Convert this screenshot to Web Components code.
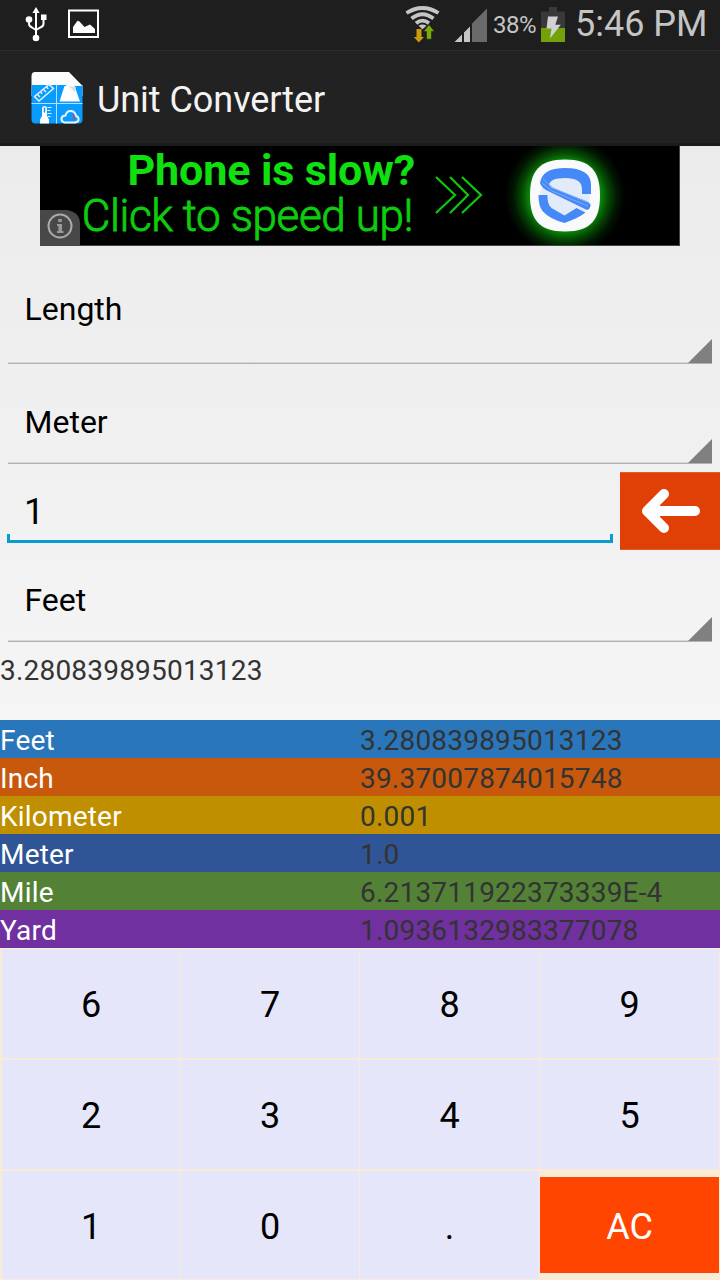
<!DOCTYPE html>
<html lang="en">
<head>
<meta charset="utf-8">
<title>Unit Converter</title>
<style>
    body {
        margin: 0;
        font-family: Roboto, "Noto Sans", sans-serif;
        color: #000;
    }
</style>
</head>
<body>
<converter-app>
    <status-bar slot="top" battery="38%" time="5:46 PM"></status-bar>
    <action-bar slot="top">Unit Converter</action-bar>
    <ad-banner>
        <span slot="headline">Phone is slow?</span>
        <span slot="action">Click to speed up!</span>
    </ad-banner>
    <unit-spinner style="height: 118px; --pad: 40px">Length</unit-spinner>
    <unit-spinner style="height: 100px; --pad: 35px">Meter</unit-spinner>
    <value-field>1</value-field>
    <unit-spinner style="height: 92px; --pad: 27px">Feet</unit-spinner>
    <result-text>3.280839895013123</result-text>
    <unit-row color="#2a76ba" name="Feet">3.280839895013123</unit-row>
    <unit-row color="#c8590c" name="Inch">39.37007874015748</unit-row>
    <unit-row color="#bf8f00" name="Kilometer">0.001</unit-row>
    <unit-row color="#2f5596" name="Meter">1.0</unit-row>
    <unit-row color="#538237" name="Mile">6.213711922373339E-4</unit-row>
    <unit-row color="#7030a0" name="Yard">1.0936132983377078</unit-row>
    <key-pad>
        <key-button>6</key-button>
        <key-button>7</key-button>
        <key-button>8</key-button>
        <key-button>9</key-button>
        <key-button>2</key-button>
        <key-button>3</key-button>
        <key-button>4</key-button>
        <key-button>5</key-button>
        <key-button>1</key-button>
        <key-button>0</key-button>
        <key-button>.</key-button>
        <key-button accent>AC</key-button>
    </key-pad>
</converter-app>

<script>
class ConverterApp extends HTMLElement {
    constructor() {
        super();
        this.shadow = this.attachShadow({ mode: "open" });
    }
    connectedCallback() {
        this.shadow.innerHTML = `<style>
        :host{
            display:flex;
            flex-direction:column;
            width:720px;
            height:1280px;
            overflow:hidden;
            background:linear-gradient(#e9e9e9, #f5f5f5 720px);
        }
        </style>
        <slot name="top"></slot>
        <slot></slot>
        `;
    }
}

window.customElements.define("converter-app", ConverterApp);

class StatusBar extends HTMLElement {
    constructor() {
        super();
        this.shadow = this.attachShadow({ mode: "open" });
    }
    connectedCallback() {
        this.shadow.innerHTML = `<style>
        :host{
            display:flex;
            box-sizing:border-box;
            height:51px;
            background:#1e1e1e;
            border-bottom:1px solid #2d2d2d;
            color:#c5c5c5;
        }
        svg{
            display:block;
            flex:none;
        }
        .spacer{
            flex:1;
        }
        .battery{
            font-size:24px;
            line-height:51px;
            width:48px;
            white-space:nowrap;
            letter-spacing:-.5px;
        }
        .time{
            font-size:36px;
            line-height:49px;
            width:145px;
            white-space:nowrap;
        }
        </style>
        <svg width="110" height="50" viewBox="0 0 110 50">
            <g fill="none" stroke="#fff" stroke-width="2">
                <path d="M36 10v26M29 20v4q0 2 3 3.500l4 2.500M43.500 18v6q0 2-3 3.500l-4.500 2.500"/>
            </g>
            <path fill="#fff" d="M36 7l3.600 6h-7.200zM41 14.500h5.500v5.500H41z"/>
            <circle cx="29" cy="19.500" r="3.300" fill="#fff"/>
            <circle cx="36" cy="38" r="3.300" fill="#fff"/>
            <path fill="#fff" fill-rule="evenodd" d="M68 9.500h31V38H68zM70 11.500V36h27V11.500z"/>
            <path fill="#fff" d="M73 33v-6l4.500-6.200 2 .7 5 5.500 5.500-2.500 5 4.500v4z"/>
        </svg>
        <div class="spacer"></div>
        <svg width="90" height="50" viewBox="403 0 90 50">
            <g fill="none" stroke="#c5c5c5" stroke-width="3.800">
                <path d="M406.500 13Q422.500 3 438.500 13"/>
                <path d="M411.500 18.500Q422.500 10 433.500 18.500"/>
                <path d="M416 23.300Q422.500 18 429 23.300"/>
            </g>
            <path fill="#c5c5c5" d="M418.500 25.800q4-2.500 8 0l-4 3.500z"/>
            <path fill="#c99a0c" d="M416.500 29h5v8h2.500l-5.200 5.500-5-5.500h2.700z"/>
            <path fill="#7aab0a" stroke="#1e1e1e" stroke-width=".6" d="M429 24.500l5.500 7h-3v7.700h-5v-7.700h-3z"/>
            <path fill="#6a6a6a" d="M472 23.500L487 8.500V42H472z"/>
            <path fill="#c5c5c5" d="M454.500 42l7.500-7.500V42zM464 32.500l6-6V42h-6z"/>
        </svg>
        <div class="battery">${this.getAttribute("battery")}</div>
        <svg width="34" height="50" viewBox="541 0 34 50">
            <path fill="#393939" d="M541 11.500h8V7h8v4.500h8V28h-24z"/>
            <path fill="#72a109" d="M541 28h24v14h-24z"/>
            <path fill="#d2d2d2" d="M548 16.500h10l-2.700 8.300h5.500L550 38.500l1.500-10h-5z"/>
        </svg>
        <div class="time">${this.getAttribute("time")}</div>
        `;
    }
}

window.customElements.define("status-bar", StatusBar);

class ActionBar extends HTMLElement {
    constructor() {
        super();
        this.shadow = this.attachShadow({ mode: "open" });
    }
    connectedCallback() {
        this.shadow.innerHTML = `<style>
        :host{
            display:flex;
            align-items:center;
            box-sizing:border-box;
            height:95px;
            padding-left:31px;
            gap:14px;
            background:#222;
            border-bottom:3px solid #1b1b1b;
            color:#f3f3f3;
            font-size:36px;
            letter-spacing:-.05px;
            white-space:nowrap;
        }
        span{
            padding-top:6px;
        }
        svg{
            padding-top:2px;
        }
        </style>
        <svg width="52" height="52" viewBox="0 0 52 52">
            <path fill="#fdfdfd" d="M4 0h34l13.500 14v10H.500V4q0-4 3.500-4z"/>
            <path fill="#0a9bff" d="M.500 13h51v34.500q0 4-4 4h-43q-4 0-4-4z"/>
            <path fill="#fdfdfd" d="M38 1l13.500 13H35z"/>
            <path stroke="#b5e0ff" d="M.500 31.500h51M25.500 13v38.500"/>
            <g fill="none" stroke="#e8f6ff" stroke-width="1.400">
                <path d="M3.500 24.500L18 12.500l4.500 4L8 29z"/>
                <path d="M6.500 22.500l2.500 2.500M9.500 20l1.700 1.700M12.500 17.500l2.500 2.500M15.500 15l1.700 1.700"/>
                <path stroke-width="1" d="M16.500 35.500h4M16.500 38.500h3M16.500 41.500h4M16.500 44.500h3"/>
                <path stroke-width="2" d="M33.500 50.500q-3.500-1-3-4 .500-3 4-3 1-4.500 5-4.500 4.500 0 5.500 5 3 1 2.500 4-.500 2-3.500 2.500z"/>
            </g>
            <path fill="#fdfdfd" d="M33.500 14h10l5.500 15.500H28.500z"/>
            <path fill="#ddd" d="M38 14l5.500 6 1.500-5z"/>
            <path fill="#fdfdfd" d="M11 44v-8q.200-2 2.500-2 2.300 0 2.500 2v8l2 3.500v4H9v-4z"/>
            <path stroke="#0a9bff" stroke-width="1.500" d="M13.500 35.500v5"/>
            <path fill="none" stroke="#d83a61" stroke-width="1.500" d="M42 42.500q3 2.500 0 5"/>
        </svg>
        <span><slot></slot></span>
        `;
    }
}

window.customElements.define("action-bar", ActionBar);

class AdBanner extends HTMLElement {
    constructor() {
        super();
        this.shadow = this.attachShadow({ mode: "open" });
    }
    connectedCallback() {
        this.shadow.innerHTML = `<style>
        :host{
            display:flex;
            position:relative;
            box-sizing:border-box;
            flex:none;
            width:640px;
            height:100px;
            margin:0 40px;
            border-bottom:1px solid #444;
            border-right:1px solid #444;
            background:#000;
            color:#10e010;
            white-space:nowrap;
            overflow:hidden;
        }
        .copy{
            display:flex;
            flex-direction:column;
            align-items:flex-end;
            width:375px;
        }
        .headline{
            font-size:43px;
            font-weight:700;
            line-height:49px;
            letter-spacing:-.1px;
        }
        .action{
            padding-right:2px;
            font-size:44px;
            font-weight:300;
            line-height:43px;
            letter-spacing:-.4px;
            color:#0dcd0d;
            -webkit-text-stroke:.9px #0dcd0d;
        }
        .art{
            flex:none;
        }
        .info{
            position:absolute;
            left:0;
            bottom:0;
        }
        </style>
        <div class="copy">
            <div class="headline"><slot name="headline"></slot></div>
            <div class="action"><slot name="action"></slot></div>
        </div>
        <svg class="art" width="264" height="99" viewBox="415 146 264 99">
            <defs>
                <radialGradient id="glow">
                    <stop offset=".5" stop-color="#10a80c"/>
                    <stop offset=".6" stop-color="#0a8407"/>
                    <stop offset=".72" stop-color="#054a04"/>
                    <stop offset=".86" stop-color="#021802"/>
                    <stop offset="1" stop-color="#000"/>
                </radialGradient>
            </defs>
            <path fill="none" stroke="#0dc80d" stroke-width="2.200" d="M436 177l19 18-19 18M450 177l18 18-18 18M462 177l19 18-19 18"/>
            <circle cx="565" cy="196" r="60" fill="url(#glow)"/>
            <path fill="#fafafc" d="M565 159.500c26 0 35 12 35 36s-9 36-35 36-35-12-35-36 9-36 35-36z"/>
            <circle cx="565" cy="196" r="25" fill="#e3eaf8"/>
            <path fill="#4589f8" d="M540 183q2-15 25-15 26 0 26 17v9h-9v-5q0-11-17-11-15 0-16 7l3 3 34 13q5 2 4.500 5-.5 3-3.500 4l-37-18q-9-4-10-9z"/>
            <path fill="#4589f8" d="M538.500 195h9q-.500 9 4 13l13 7.500 12-7.500 9 4.500q-6 5-21 10.500-15-4-22-12-4-5-4-16z"/>
            <path fill="none" stroke="#7dabfa" stroke-width="1" d="M543 179l10 9 36 15M542 183l10 8 36 15"/>
        </svg>
        <svg class="info" width="40" height="35" viewBox="0 0 40 35">
            <path fill="#484848" d="M0 0h27q13 2 13 14v21H0z"/>
            <circle cx="20" cy="16" r="11.500" fill="none" stroke="#aaa" stroke-width="2"/>
            <path fill="#999" d="M18.300 9h3.500v3h-3.500zM17 14h5v7h1.500v2H17v-2h1.500v-5H17z"/>
        </svg>
        `;
    }
}

window.customElements.define("ad-banner", AdBanner);

class UnitSpinner extends HTMLElement {
    constructor() {
        super();
        this.shadow = this.attachShadow({ mode: "open" });
    }
    connectedCallback() {
        this.setAttribute("role", "listbox");
        this.shadow.innerHTML = `<style>
        :host{
            display:flex;
            justify-content:space-between;
            align-items:flex-end;
            box-sizing:border-box;
            flex:none;
            margin:0 8px;
            border-bottom:1px solid #b2b2b2;
            box-shadow:inset 0 -1px #d8d8d8;
        }
        span{
            align-self:flex-start;
            padding:var(--pad) 0 0 16.5px;
            font-size:32px;
            line-height:46px;
        }
        svg{
            display:block;
        }
        </style>
        <span><slot></slot></span>
        <svg width="24" height="24"><path fill="#808080" d="M24 0v24H0z"/></svg>
        `;
    }
}

window.customElements.define("unit-spinner", UnitSpinner);

class ValueField extends HTMLElement {
    constructor() {
        super();
        this.shadow = this.attachShadow({ mode: "open" });
    }
    connectedCallback() {
        this.shadow.innerHTML = `<style>
        :host{
            display:flex;
            box-sizing:border-box;
            flex:none;
            height:86px;
            padding:8px 0 0 7px;
            gap:7px;
        }
        .field{
            display:flex;
            flex-direction:column;
            width:606px;
            height:71px;
        }
        .text{
            flex:1;
            padding-left:17px;
            font-size:36px;
            line-height:81px;
            height:62px;
        }
        .line{
            box-sizing:border-box;
            height:9px;
            border:3px solid #0a9bd0;
            border-top:0;
        }
        .back{
            display:flex;
            box-sizing:border-box;
            width:100px;
            height:78px;
            background:#e04006;
            border-top:1px solid #e65a2c;
            border-bottom:1px solid #e65a2c;
        }
        </style>
        <div class="field">
            <div class="text"><slot></slot></div>
            <div class="line"></div>
        </div>
        <div class="back">
            <svg width="100" height="76" viewBox="620 473 100 76">
                <path fill="none" stroke="#fff" stroke-width="10" stroke-linecap="round" stroke-linejoin="round" d="M695 511h-45M664 494l-17 17 17 17"/>
                <path fill="#fff" d="M647 511l13-11v22z"/>
            </svg>
        </div>
        `;
    }
}

window.customElements.define("value-field", ValueField);

class ResultText extends HTMLElement {
    constructor() {
        super();
        this.shadow = this.attachShadow({ mode: "open" });
    }
    connectedCallback() {
        this.shadow.innerHTML = `<style>
        :host{
            display:block;
            flex:none;
            height:78px;
            color:#333;
            font-size:28px;
            line-height:57px;
            letter-spacing:.2px;
        }
        </style>
        <slot></slot>
        `;
    }
}

window.customElements.define("result-text", ResultText);

class UnitRow extends HTMLElement {
    constructor() {
        super();
        this.shadow = this.attachShadow({ mode: "open" });
    }
    connectedCallback() {
        this.shadow.innerHTML = `<style>
        :host{
            display:grid;
            grid-template-columns:1fr 1fr;
            flex:none;
            height:38px;
            background:${this.getAttribute("color")};
            color:#333;
            font-size:28px;
            line-height:41px;
            letter-spacing:.2px;
        }
        .name{
            color:#fff;
        }
        </style>
        <div class="name">${this.getAttribute("name")}</div>
        <div><slot></slot></div>
        `;
    }
}

window.customElements.define("unit-row", UnitRow);

class KeyPad extends HTMLElement {
    constructor() {
        super();
        this.shadow = this.attachShadow({ mode: "open" });
    }
    connectedCallback() {
        this.shadow.innerHTML = `<style>
        :host{
            display:grid;
            grid-template-columns:178px 178px 179px 179px;
            grid-template-rows:109px 109px 108px;
            gap:2px 1px;
            box-sizing:border-box;
            flex:none;
            height:332px;
            padding:1px 1px 1px 2px;
            background:#faebd7;
        }
        </style>
        <slot></slot>
        `;
    }
}

window.customElements.define("key-pad", KeyPad);

class KeyButton extends HTMLElement {
    constructor() {
        super();
        this.shadow = this.attachShadow({ mode: "open" });
    }
    connectedCallback() {
        this.setAttribute("role", "button");
        this.shadow.innerHTML = `<style>
        :host{
            display:flex;
            align-items:center;
            justify-content:center;
            background:#e6e6fa;
            font-size:36px;
            line-height:42px;
        }
        :host([accent]){
            margin:6px 0;
            background:#ff4500;
            color:#fff;
        }
        span{
            padding-top:3px;
        }
        </style>
        <span><slot></slot></span>
        `;
    }
}

window.customElements.define("key-button", KeyButton);
</script>
</body>
</html>
